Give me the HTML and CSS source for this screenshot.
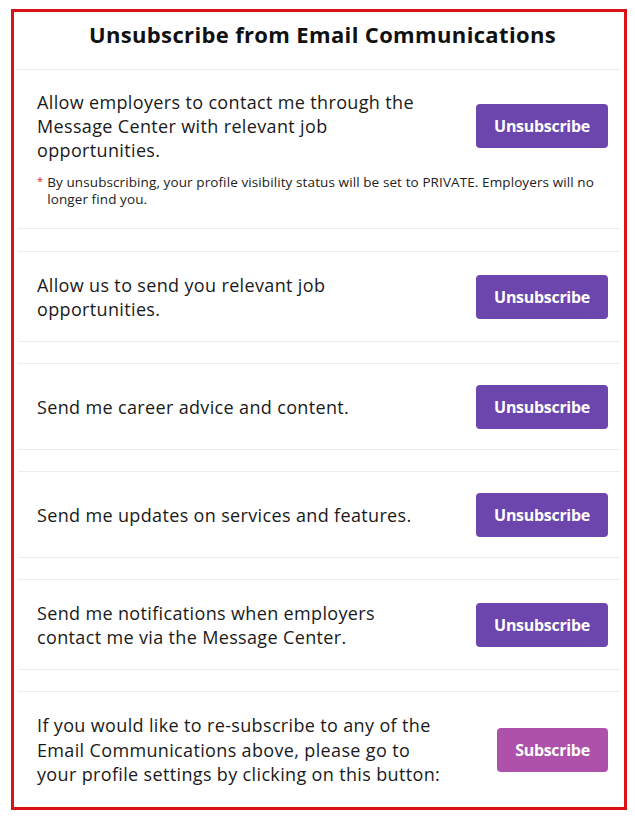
FILE: index.html
```html
<!DOCTYPE html>
<html>
<head>
<meta charset="utf-8">
<link rel="stylesheet" href="styles.css">
</head>
<body>
<div class="frame">
  <header class="head">
    <h1 class="title">Unsubscribe from Email Communications</h1>
  </header>
  <div class="list">
    <section class="card first">
      <div class="row">
        <p class="text">Allow employers to contact me through the<br>Message Center with relevant job<br>opportunities.</p>
        <button class="btn">Unsubscribe</button>
      </div>
      <p class="note"><span class="star">*</span><span>By unsubscribing, your profile visibility status will be set to PRIVATE. Employers will no longer find you.</span></p>
    </section>
    <section class="card">
      <div class="row">
        <p class="text">Allow us to send you relevant job<br>opportunities.</p>
        <button class="btn">Unsubscribe</button>
      </div>
    </section>
    <section class="card">
      <div class="row">
        <p class="text">Send me career advice and content.</p>
        <button class="btn">Unsubscribe</button>
      </div>
    </section>
    <section class="card">
      <div class="row">
        <p class="text">Send me updates on services and features.</p>
        <button class="btn">Unsubscribe</button>
      </div>
    </section>
    <section class="card">
      <div class="row">
        <p class="text">Send me notifications when employers<br>contact me via the Message Center.</p>
        <button class="btn">Unsubscribe</button>
      </div>
    </section>
    <section class="card last">
      <div class="row">
        <p class="text wide">If you would like to re-subscribe to any of the<br>Email Communications above, please go to<br>your profile settings by clicking on this button:</p>
        <button class="btn sub">Subscribe</button>
      </div>
    </section>
  </div>
</div>
</body>
</html>
```
FILE: styles.css
```css
* { box-sizing: border-box; }
html, body { margin: 0; padding: 0; background: #fff; }
body { font-family: "Open Sans", "Noto Sans", sans-serif; color: #1a1a1a; }
.frame {
  margin: 9px 0 0 11px;
  width: 616px;
  border: 3px solid #dc1219;
  background: #fff;
}
.head {
  height: 58px;
  display: flex;
  align-items: flex-start;
  justify-content: center;
  padding: 7px 0 0 10px;
  border-bottom: 1px solid #ececec;
  margin: 0 4px 0 1px;
}
.title {
  margin: 0;
  font-size: 22px;
  line-height: 30px;
  font-weight: 700;
  color: #111;
  letter-spacing: 0.35px;
}
.list {
  display: flex;
  flex-direction: column;
  gap: 21px;
  padding: 0 4px;
}
.card {
  border-bottom: 1px solid #ececec;
  border-top: 1px solid #ececec;
  padding: 21px 12px 20px 19px;
}
.card.first { border-top: none; padding-top: 20px; padding-bottom: 20px; margin-bottom: 1px; }
.card.last { border-bottom: none; padding-bottom: 20px; }
.row {
  display: flex;
  align-items: center;
  justify-content: space-between;
  gap: 12px;
}
.text {
  margin: 0;
  font-size: 18px;
  line-height: 24px;
  letter-spacing: 0.35px;
  white-space: nowrap;
}
.text.wide { line-height: 24.5px; }
.btn {
  flex: none;
  width: 132px;
  height: 44px;
  border: none;
  border-radius: 4px;
  background: #6c45ad;
  color: #fff;
  font-family: "Open Sans", "Noto Sans", sans-serif;
  font-weight: 700;
  font-size: 16px;
  letter-spacing: -0.3px;
  padding: 0;
}
.btn.sub { width: 111px; background: #ad51ab; }
.note {
  display: flex;
  gap: 4px;
  margin: 12px 0 0 0;
  font-size: 13.5px;
  line-height: 17px;
  letter-spacing: 0.1px;
  color: #222;
}
.star { color: #d0282e; font-size: 11px; line-height: 14px; }
```
